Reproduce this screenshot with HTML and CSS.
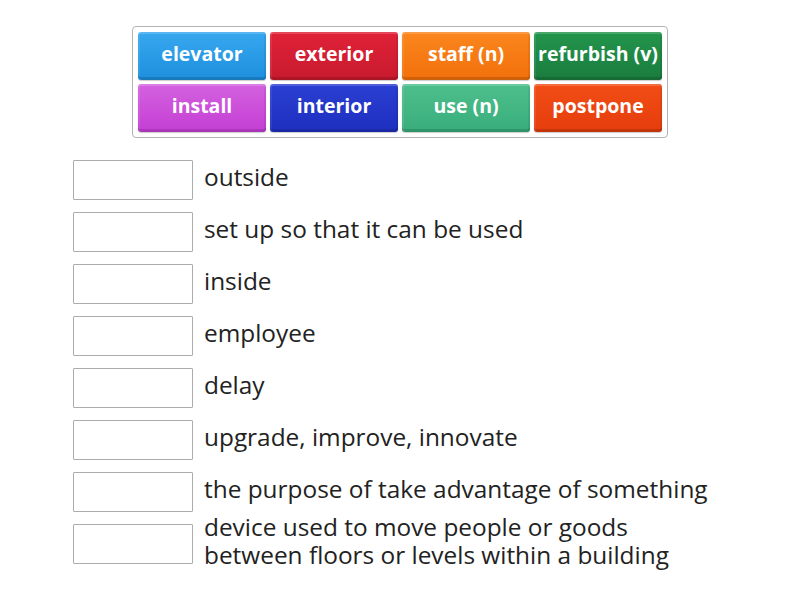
FILE: index.html
```html
<!DOCTYPE html>
<html>
<head>
<meta charset="utf-8">
<link rel="stylesheet" href="styles.css">
</head>
<body>
<div class="page">
  <div class="bank">
    <div class="tile blue">elevator</div>
    <div class="tile red">exterior</div>
    <div class="tile orange">staff (n)</div>
    <div class="tile green">refurbish (v)</div>
    <div class="tile pink">install</div>
    <div class="tile navy">interior</div>
    <div class="tile teal">use (n)</div>
    <div class="tile vermilion">postpone</div>
  </div>
  <div class="rows">
    <div class="row"><div class="slot"></div><div class="def">outside</div></div>
    <div class="row"><div class="slot"></div><div class="def">set up so that it can be used</div></div>
    <div class="row"><div class="slot"></div><div class="def">inside</div></div>
    <div class="row"><div class="slot"></div><div class="def">employee</div></div>
    <div class="row"><div class="slot"></div><div class="def">delay</div></div>
    <div class="row"><div class="slot"></div><div class="def">upgrade, improve, innovate</div></div>
    <div class="row"><div class="slot"></div><div class="def">the purpose of take advantage of something</div></div>
    <div class="row"><div class="slot"></div><div class="def">device used to move people or goods between floors or levels within a building</div></div>
  </div>
</div>
</body>
</html>
```
FILE: styles.css
```css
html, body {
  margin: 0;
  padding: 0;
  background: #fff;
}
.page {
  width: 800px;
  height: 600px;
  display: flex;
  flex-direction: column;
  align-items: center;
  font-family: "Open Sans", "Liberation Sans", sans-serif;
}
.bank {
  margin-top: 26px;
  border: 1px solid #b4b4b4;
  border-radius: 4px;
  padding: 5px 5px 5px 5px;
  display: grid;
  grid-template-columns: repeat(4, 128px);
  grid-auto-rows: 48px;
  gap: 4px;
}
.tile {
  border-radius: 3px;
  color: #fff;
  font-size: 19.5px;
  font-weight: 700;
  display: flex;
  align-items: center;
  justify-content: center;
  white-space: nowrap;
  box-sizing: border-box;
  padding-bottom: 5px;
  box-shadow: inset 0 -3px 0 rgba(0,0,0,0.14), inset 0 2px 0 rgba(255,255,255,0.18), inset -2px 0 0 rgba(0,0,0,0.06), inset 2px 0 0 rgba(255,255,255,0.08), 0 1px 1px rgba(0,0,0,0.2);
}
.blue { background: linear-gradient(#37a8ef, #1d8fdd); }
.red { background: linear-gradient(#e02238, #c81a2e); }
.orange { background: linear-gradient(#fb861e, #f2700c); }
.green { background: linear-gradient(#23954c, #1a7c3e); }
.pink { background: linear-gradient(#d462df, #c43ed4); }
.navy { background: linear-gradient(#2a3fd2, #1e2fbf); }
.teal { background: linear-gradient(#4dbf8c, #38ad7b); }
.vermilion { background: linear-gradient(#f24d16, #e53d0c); }

.rows {
  align-self: flex-start;
  margin-top: 22px;
  margin-left: 73px;
  display: flex;
  flex-direction: column;
  gap: 12px;
}
.row {
  display: flex;
  align-items: center;
  height: 40px;
}
.slot {
  width: 120px;
  height: 40px;
  box-sizing: border-box;
  border: 1px solid #acacac;
  border-radius: 1px;
  background: #fff;
  flex: none;
}
.def {
  margin-left: 11px;
  max-width: 506px;
  font-size: 24.4px;
  line-height: 28px;
  padding-bottom: 6px;
  color: #222;
}
```
